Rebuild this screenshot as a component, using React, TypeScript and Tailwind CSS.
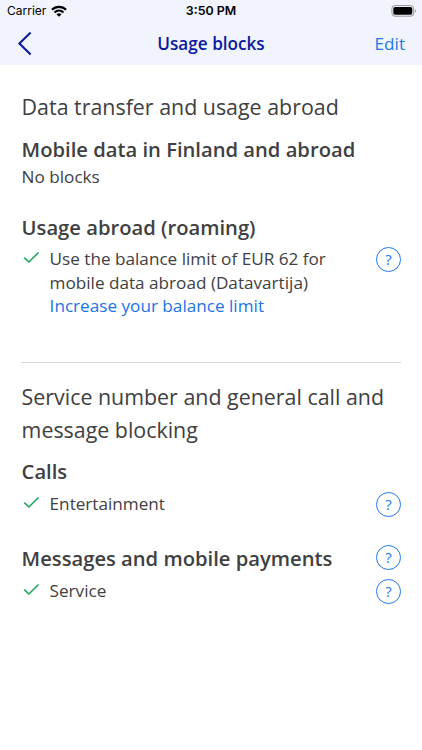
import type { ReactNode } from 'react';

function WifiIcon() {
  return (
    <svg width="16" height="12" viewBox="0 0 16 12" fill="none" className="mb-px ml-[5px]">
      <path d="M0.9 4.8C4.8 .8 11.2 .8 15.1 4.8" stroke="#000" strokeWidth="2.3" />
      <path d="M3.5 7.4C6.1 5 9.9 5 12.5 7.4" stroke="#000" strokeWidth="2.1" />
      <path d="M5.5 9.4C7 8 9 8 10.5 9.4L8 11.8Z" fill="#000" />
    </svg>
  );
}

function BatteryIcon() {
  return (
    <svg width="26" height="12" viewBox="0 0 26 12" fill="none">
      <rect x="0.9" y="0.6" width="21.8" height="10.6" rx="3" stroke="#94959b" strokeWidth="1" />
      <rect x="2.3" y="2" width="19" height="7.8" rx="1.7" fill="#000" />
      <path d="M24 4.2C25.3 4.7 25.3 7.1 24 7.6Z" fill="#94959b" />
    </svg>
  );
}

function CheckIcon() {
  return (
    <svg width="17" height="13" viewBox="0 0 17 13" fill="none" className="mt-[4px] ml-[2px] shrink-0">
      <path d="M1.3 6.6L5.9 11L15.5 1.5" stroke="#18a558" strokeWidth="1.5" />
    </svg>
  );
}

function HelpButton() {
  return (
    <button
      aria-label="Help"
      className="-mt-[0.5px] flex h-[25px] w-[25px] shrink-0 items-center justify-center rounded-full border border-[#2079e8] text-[15px] leading-none text-[#2079e8]"
    >
      ?
    </button>
  );
}

function SectionTitle({ children }: { children: ReactNode }) {
  return <h2 className="pl-[0.6px] text-[21.4px] leading-[33px]">{children}</h2>;
}

function GroupTitle({ children }: { children: ReactNode }) {
  return <h3 className="pb-[2px] pl-[0.6px] text-[20.2px] leading-[26px] font-semibold">{children}</h3>;
}

function BlockRow({ children }: { children: ReactNode }) {
  return (
    <div className="mt-[6px] flex items-start">
      <CheckIcon />
      <div className="ml-[9.6px] flex-1">{children}</div>
      <HelpButton />
    </div>
  );
}

export default function App() {
  return (
    <div className="h-[750px] w-[422px] overflow-hidden bg-white font-['Open_Sans',sans-serif] text-[17.15px] leading-[23.5px] text-[#404042]">
      <header className="h-[65px] bg-[#f1f4fd]">
        {/* Status bar */}
        <div className="grid h-[22px] grid-cols-3 items-center pr-[5px] pl-[7px] font-[Inter,sans-serif] text-[12px] leading-none text-black">
          <div className="flex items-center">
            Carrier
            <WifiIcon />
          </div>
          <div className="pr-[2px] text-center text-[12.4px] font-semibold">3:50 PM</div>
          <div className="flex justify-end">
            <BatteryIcon />
          </div>
        </div>

        {/* Navigation */}
        <nav className="grid h-[43px] grid-cols-[1fr_auto_1fr] items-center pr-[17px] pl-[17px]">
          <button aria-label="Back">
            <svg width="16" height="24" viewBox="0 0 16 24" fill="none">
              <path d="M13.6 0.6L2.4 11.6L13.6 22.6" stroke="#0a1a9e" strokeWidth="2.1" />
            </svg>
          </button>
          <h1 className="text-[17.15px] font-semibold text-[#0a1a9e]">Usage blocks</h1>
          <button className="text-right text-[#2079e8]">Edit</button>
        </nav>
      </header>

      <main className="px-[21px] pt-[25px]">
        <section>
          <SectionTitle>Data transfer and usage abroad</SectionTitle>
          <div className="mt-[13px]">
            <GroupTitle>Mobile data in Finland and abroad</GroupTitle>
            <p className="mt-px pl-[0.6px]">No blocks</p>
          </div>
          <div className="mt-[25px]">
            <GroupTitle>Usage abroad (roaming)</GroupTitle>
            <div className="-mt-[0.5px]">
              <BlockRow>
                <p>
                  Use the balance limit of EUR 62 for
                  <br />
                  mobile data abroad (Datavartija)
                </p>
                <a className="text-[#1a73e8]">Increase your balance limit</a>
              </BlockRow>
            </div>
          </div>
        </section>

        <hr className="mt-[44.5px] border-[#d9d9dc]" />

        <section className="mt-[17px]">
          <SectionTitle>Service number and general call and message blocking</SectionTitle>
          <div className="mt-[12px]">
            <GroupTitle>Calls</GroupTitle>
            <BlockRow>Entertainment</BlockRow>
          </div>
          <div className="mt-[28.5px]">
            <div className="flex h-[28px] items-start justify-between">
              <GroupTitle>Messages and mobile payments</GroupTitle>
              <HelpButton />
            </div>
            <BlockRow>Service</BlockRow>
          </div>
        </section>
      </main>
    </div>
  );
}
